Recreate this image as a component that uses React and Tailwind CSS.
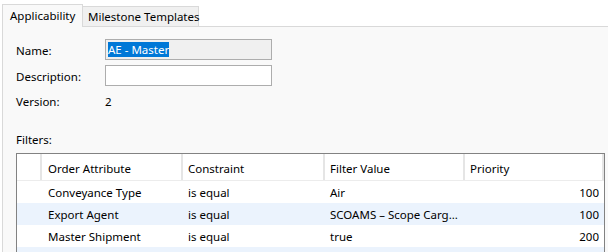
export default function App() {
  const rows = [
    ["Conveyance Type", "is equal", "Air", "100"],
    ["Export Agent", "is equal", "SCOAMS – Scope Carg...", "100"],
    ["Master Shipment", "is equal", "true", "200"],
    ["", "", "", ""],
  ];
  const cols = "grid grid-cols-[25px_141px_142px_140px_139px]";
  return (
    <div
      className="w-[608px] h-[252px] bg-white overflow-hidden flex flex-col text-[11.5px] text-black leading-none whitespace-nowrap"
      style={{ fontFamily: '"Segoe UI", "Noto Sans", "Open Sans", sans-serif' }}
    >
      <div className="h-[26px] flex items-end pl-[2px] shrink-0">
        <div className="relative z-10 -mb-px h-[23px] w-[81px] border border-b-0 border-[#d9d9d9] bg-[#f9f9f9] pl-[7px] pt-[5px]">
          Applicability
        </div>
        <div className="h-[20px] w-[116px] border border-l-0 border-b-0 border-[#d9d9d9] bg-[#f0f0f0] pl-[5px] pt-[4px]">
          Milestone Templates
        </div>
      </div>
      <div className="flex-1 ml-[2px] border-t border-l border-[#d9d9d9] bg-[#f9f9f9] pl-[13px] pt-[12px] flex flex-col">
        <div className="flex items-center h-[21px]">
          <div className="w-[89px] pt-[2px]">Name:</div>
          <div className="w-[167px] h-[21px] border border-[#adadad] bg-[#f0f0f0] flex items-center pl-[2px]">
            <span className="bg-[#0078d7] text-white h-[15px] flex items-center pt-[1px]">AE - Master</span>
          </div>
        </div>
        <div className="flex items-center h-[21px] mt-[5px]">
          <div className="w-[89px] pt-[2px]">Description:</div>
          <div className="w-[167px] h-[21px] border border-[#adadad] bg-white" />
        </div>
        <div className="flex items-center h-[20px] mt-[5px] pt-[2px]">
          <div className="w-[89px]">Version:</div>
          <div>2</div>
        </div>
        <div className="flex items-center h-[20px] mt-[18px] pt-[2px]">Filters:</div>
        <div className="mt-[4px] w-[589px] flex-1 border border-b-0 border-[#828282] bg-white">
          <div className={`${cols} h-[27px] border-b border-[#ececec]`}>
            <div className="border-r-2 border-[#e5e5e5]" />
            <div className="border-r-2 border-[#e5e5e5] flex items-center pl-[6px] pt-[3px]">Order Attribute</div>
            <div className="border-r-2 border-[#e5e5e5] flex items-center pl-[5px] pt-[3px]">Constraint</div>
            <div className="border-r-2 border-[#e5e5e5] flex items-center pl-[5px] pt-[3px]">Filter Value</div>
            <div className="border-r-2 border-[#e5e5e5] flex items-center pl-[5px] pt-[3px]">Priority</div>
          </div>
          {rows.map((r, i) => (
            <div key={i} className={`${cols} h-[22px] ${i % 2 === 1 ? "bg-[#ebf3fd]" : "bg-white"}`}>
              <div />
              <div className="flex items-center pl-[6px] pt-[2px]">{r[0]}</div>
              <div className="flex items-center pl-[5px] pt-[2px]">{r[1]}</div>
              <div className="flex items-center pl-[5px] pt-[2px]">{r[2]}</div>
              <div className="flex items-center justify-end pr-[5px] pt-[2px]">{r[3]}</div>
            </div>
          ))}
        </div>
      </div>
    </div>
  );
}
